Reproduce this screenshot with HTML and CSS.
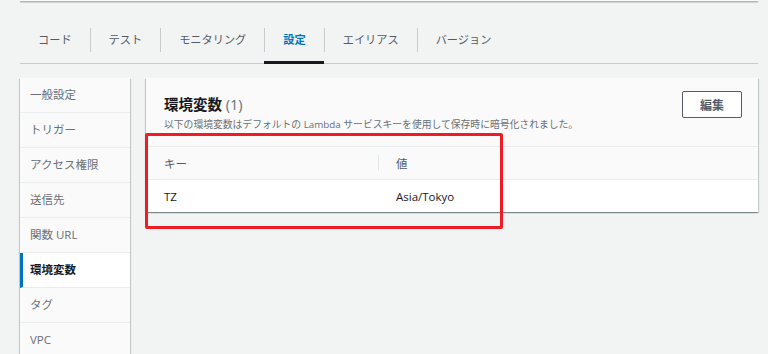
FILE: index.html
```html
<!DOCTYPE html>
<html lang="ja">
<head>
    <meta charset="UTF-8">
    <meta name="viewport" content="width=device-width, initial-scale=1.0">
    <title>環境変数</title>
    <link rel="stylesheet" href="styles.css">
</head>
<body>
    <div class="top-panel"></div>

    <div class="tabs">
        <div class="tab"><span class="tab-label first">コード</span></div>
        <div class="tab"><span class="tab-label">テスト</span></div>
        <div class="tab"><span class="tab-label">モニタリング</span></div>
        <div class="tab active"><span class="tab-label">設定</span></div>
        <div class="tab"><span class="tab-label">エイリアス</span></div>
        <div class="tab"><span class="tab-label">バージョン</span></div>
    </div>

    <div class="content">
        <ul class="side-nav">
            <li>一般設定</li>
            <li>トリガー</li>
            <li>アクセス権限</li>
            <li>送信先</li>
            <li>関数 URL</li>
            <li class="active">環境変数</li>
            <li>タグ</li>
            <li>VPC</li>
        </ul>

        <div class="card">
            <div class="card-header">
                <div class="card-title">
                    <h2>環境変数 <span class="count">(1)</span></h2>
                    <p>以下の環境変数はデフォルトの Lambda サービスキーを使用して保存時に暗号化されました。</p>
                </div>
                <button class="btn">編集</button>
            </div>
            <div class="table">
                <div class="row head">
                    <div class="cell key">キー</div>
                    <div class="cell value"><span class="divider"></span>値</div>
                </div>
                <div class="row">
                    <div class="cell key">TZ</div>
                    <div class="cell value">Asia/Tokyo</div>
                </div>
            </div>
        </div>
    </div>

    <div class="highlight"></div>
</body>
</html>
```

FILE: styles.css
```css
body {
    margin: 0;
    background: #f2f3f3;
    font-family: "Open Sans", "Noto Sans CJK JP", sans-serif;
    color: #16191f;
    overflow: hidden;
}
.top-panel {
    margin: 0 10px 0 20px;
    height: 1px;
    background: #fafafa;
    border-bottom: 1px solid #aab7b8;
    box-shadow: 0 1px 1px rgba(0, 28, 36, 0.15);
}

/* tabs */
.tabs {
    display: flex;
    margin: 26px 10px 0 20px;
    border-bottom: 1px solid #c6cccd;
}
.tab {
    padding-bottom: 9px;
    border-bottom: 3px solid transparent;
    margin-bottom: -1px;
}
.tab-label {
    display: block;
    height: 24px;
    line-height: 24px;
    padding: 0 18px;
    font-size: 11.2px;
    color: #545b64;
    border-left: 1px solid #c6cccd;
}
.tab-label.first {
    border-left: none;
}
.tab.active {
    border-bottom-color: #16191f;
}
.tab.active .tab-label {
    color: #0073bb;
    font-weight: bold;
}

/* content */
.content {
    display: flex;
    gap: 16px;
    align-items: flex-start;
    margin: 14px 10px 0 20px;
}
.side-nav {
    list-style: none;
    margin: 0;
    padding: 0;
    width: 110px;
    flex: none;
    background: #fafafa;
    box-shadow: 0 1px 1px rgba(0, 28, 36, 0.3), 1px 1px 1px rgba(0, 28, 36, 0.15), -1px 1px 1px rgba(0, 28, 36, 0.15);
}
.side-nav li {
    height: 34px;
    line-height: 34px;
    padding-left: 10px;
    font-size: 11.5px;
    color: #687078;
    border-bottom: 1px solid #eaeded;
}
.side-nav li.active {
    background: #fff;
    border-left: 3px solid #0073bb;
    padding-left: 7px;
    color: #16191f;
    font-weight: bold;
}

.card {
    flex: 1;
    background: #fff;
    box-shadow: 0 1px 1px rgba(0, 28, 36, 0.3), 1px 1px 1px rgba(0, 28, 36, 0.15), -1px 1px 1px rgba(0, 28, 36, 0.15);
}
.card-header {
    display: flex;
    justify-content: space-between;
    align-items: flex-start;
    height: 68px;
    box-sizing: border-box;
    padding: 13px 16px 0 18px;
    background: #fafafa;
}
.card-title h2 {
    margin: 3px 0 0;
    font-size: 14.5px;
    line-height: 22px;
    font-weight: bold;
}
.card-title .count {
    font-weight: normal;
    color: #687078;
}
.card-title p {
    margin: 0;
    font-size: 9.8px;
    line-height: 18px;
    color: #687078;
}
.btn {
    width: 60px;
    height: 27px;
    background: #fff;
    border: 1px solid #545b64;
    border-radius: 2px;
    font-family: inherit;
    font-size: 12px;
    font-weight: bold;
    color: #545b64;
    padding: 0;
}

.table {
    border-top: 1px solid #eaeded;
}
.row {
    display: flex;
    height: 32px;
    align-items: center;
    font-size: 11.5px;
}
.row.head {
    background: #fafafa;
    color: #545b64;
    border-bottom: 1px solid #eaeded;
}
.cell.key {
    width: 232px;
    padding-left: 18px;
    box-sizing: border-box;
}
.cell.value {
    flex: 1;
    display: flex;
    align-items: center;
}
.divider {
    width: 1px;
    height: 16px;
    background: #e4e7e8;
    margin-right: 17px;
}
.row:not(.head) .cell.value {
    padding-left: 18px;
}

.highlight {
    position: absolute;
    left: 145px;
    top: 133px;
    width: 352px;
    height: 90px;
    border: 3px solid #ee1c25;
    border-radius: 2px;
}
```
